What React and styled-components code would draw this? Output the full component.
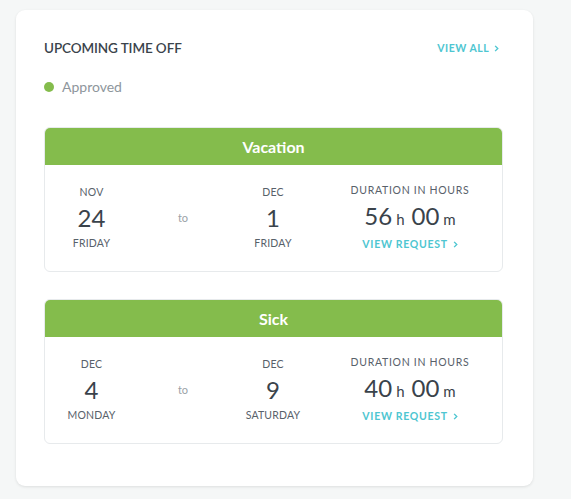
import React from "react";
import styled, { createGlobalStyle } from "styled-components";

const Global = createGlobalStyle`
  body {
    margin: 0;
    background: #f5f7f7;
    font-family: Lato, "Open Sans", sans-serif;
  }
`;

const Page = styled.div`
  padding: 10px 38px 13px 16px;
`;

const Card = styled.div`
  background: #fff;
  border-radius: 9px;
  box-shadow: 0 1px 3px rgba(0, 0, 0, 0.1);
  padding: 30px 30px 42px 28px;
`;

const Header = styled.div`
  display: flex;
  justify-content: space-between;
  align-items: center;
  height: 16px;
  padding-right: 4px;
`;

const Title = styled.h2`
  margin: 0;
  font-size: 13.5px;
  font-weight: 600;
  color: #3a434b;
  letter-spacing: -0.1px;
`;

const Link = styled.a`
  display: inline-flex;
  align-items: center;
  gap: 5px;
  font-size: ${(p) => p.size || 10.5}px;
  font-weight: 700;
  letter-spacing: ${(p) => (p.size ? "0.7px" : "0.5px")};
  color: #4ec6d1;
  text-decoration: none;
  cursor: pointer;
`;

const Legend = styled.div`
  display: flex;
  align-items: center;
  gap: 8px;
  margin-top: 22px;
  font-size: 14px;
  color: #8e969c;
`;

const Dot = styled.span`
  width: 10px;
  height: 10px;
  border-radius: 50%;
  background: #84bc4c;
`;

const List = styled.div`
  display: flex;
  flex-direction: column;
  gap: 27px;
  margin-top: 32px;
`;

const Entry = styled.div`
  border: 1px solid #e7eaec;
  border-radius: 6px;
  overflow: hidden;
`;

const Band = styled.div`
  background: #84bc4c;
  color: #fff;
  font-size: 16px;
  font-weight: 700;
  text-align: center;
  height: 37px;
  line-height: 37px;
`;

const Body = styled.div`
  display: grid;
  grid-template-columns: 93px 90px 90px 1fr;
  align-items: center;
  padding: 19px 0 21px;
`;

const Col = styled.div`
  display: flex;
  flex-direction: column;
  align-items: center;
  color: #3a434b;
`;

const Small = styled.div`
  font-size: 10.5px;
  color: #58616a;
  letter-spacing: ${(p) => (p.wide ? "0.7px" : "0.2px")};
  line-height: 12px;
`;

const Big = styled.div`
  font-size: 24px;
  font-weight: 400;
  line-height: 28px;
  margin: 6px 0 5px;
  color: #3a434b;
`;

const Unit = styled.span`
  font-size: 15px;
  margin: 0 7px 0 4px;
  &:last-child {
    margin-right: 0;
  }
`;

const To = styled.div`
  text-align: center;
  font-size: 11px;
  color: #9aa2a7;
`;

const Chevron = ({ size = 7 }) => (
  <svg width={size * 0.7} height={size} viewBox="0 0 5 8" fill="none">
    <path d="M1 1l3 3-3 3" stroke="currentColor" strokeWidth="1.6" />
  </svg>
);

const entries = [
  { type: "Vacation", from: ["NOV", "24", "FRIDAY"], to: ["DEC", "1", "FRIDAY"], h: "56", m: "00" },
  { type: "Sick", from: ["DEC", "4", "MONDAY"], to: ["DEC", "9", "SATURDAY"], h: "40", m: "00" },
];

const DateCol = ({ d }) => (
  <Col>
    <Small>{d[0]}</Small>
    <Big>{d[1]}</Big>
    <Small>{d[2]}</Small>
  </Col>
);

export default function App() {
  return (
    <>
      <Global />
      <Page>
        <Card>
          <Header>
            <Title>UPCOMING TIME OFF</Title>
            <Link>
              VIEW ALL <Chevron />
            </Link>
          </Header>
          <Legend>
            <Dot />
            Approved
          </Legend>
          <List>
            {entries.map((e) => (
              <Entry key={e.type}>
                <Band>{e.type}</Band>
                <Body>
                  <DateCol d={e.from} />
                  <To>to</To>
                  <DateCol d={e.to} />
                  <Col>
                    <Small wide>DURATION IN HOURS</Small>
                    <Big>
                      {e.h}
                      <Unit>h</Unit>
                      {e.m}
                      <Unit>m</Unit>
                    </Big>
                    <Link size={10.5}>
                      VIEW REQUEST <Chevron />
                    </Link>
                  </Col>
                </Body>
              </Entry>
            ))}
          </List>
        </Card>
      </Page>
    </>
  );
}
